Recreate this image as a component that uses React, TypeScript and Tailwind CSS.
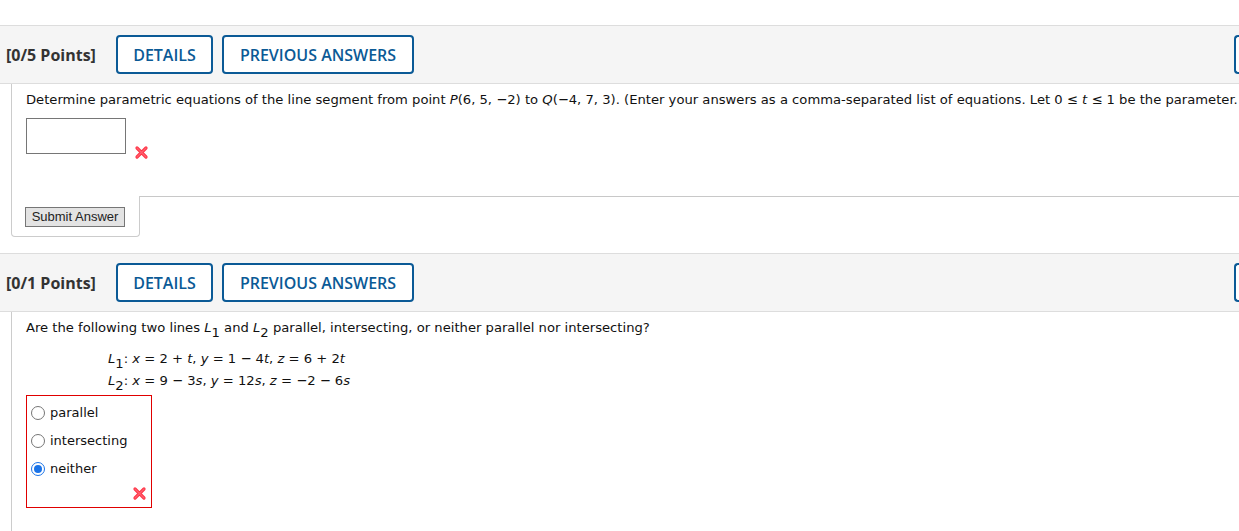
import React from "react";

const body = { fontFamily: '"DejaVu Sans", Verdana, sans-serif' } as React.CSSProperties;
const head = { fontFamily: '"Open Sans", "Noto Sans", sans-serif' } as React.CSSProperties;

function XMark() {
  return (
    <svg width="15" height="15" viewBox="0 0 15 15">
      <path d="M3 3 L12 12 M12 3 L3 12" stroke="#ff3344" strokeWidth="3.2" strokeLinecap="round" />
      <path d="M3 3 L12 12 M12 3 L3 12" stroke="#ff6070" strokeWidth="1.2" strokeLinecap="round" />
    </svg>
  );
}

function Sub({ n }: { n: string }) {
  return <span className="relative top-[5px]">{n}</span>;
}

function Header({ pts }: { pts: string }) {
  return (
    <div className="flex h-[59px] items-center border-y border-[#dddddd] bg-[#f5f5f5]" style={head}>
      <div className="w-[116px] pl-[6px] text-[16px] font-bold text-[#333333]">{pts}</div>
      <button className="flex h-[39px] w-[97px] items-center justify-center rounded-[4px] border-2 border-[#0b5a96] bg-white text-[16px] font-semibold text-[#0b5a96]">
        DETAILS
      </button>
      <button className="ml-[9px] flex h-[39px] w-[192px] items-center justify-center rounded-[4px] border-2 border-[#0b5a96] bg-white text-[16px] font-semibold text-[#0b5a96]">
        PREVIOUS ANSWERS
      </button>
      <div className="ml-auto h-[39px] w-[5px] rounded-l-[4px] border-y-2 border-l-2 border-[#0b5a96] bg-white" />
    </div>
  );
}

function Radio({ checked, label }: { checked?: boolean; label: string }) {
  return (
    <div className="flex h-[28px] items-center">
      {checked ? (
        <span className="flex h-[14px] w-[14px] items-center justify-center rounded-full border border-[#1a73e8] bg-white">
          <span className="h-[8px] w-[8px] rounded-full bg-[#1a73e8]" />
        </span>
      ) : (
        <span className="h-[14px] w-[14px] rounded-full border border-[#767676] bg-white" />
      )}
      <span className="ml-[5px] text-[13px] text-[#111111]">{label}</span>
    </div>
  );
}

export default function App() {
  return (
    <div className="h-[531px] w-[1239px] overflow-hidden bg-white" style={body}>
      <div className="h-[25px]" />
      <Header pts="[0/5 Points]" />
      <div className="ml-[11px] border-l border-[#cccccc]">
        <div className="h-[112px] pl-[14px] pt-[7px]">
          <p className="whitespace-nowrap text-[13.15px] leading-[18px] text-[#111111]">
            Determine parametric equations of the line segment from point <i>P</i>(6, 5, −2) to <i>Q</i>(−4, 7, 3). (Enter your answers as a comma-separated list of equations. Let 0 ≤ <i>t</i> ≤ 1 be the parameter.
          </p>
          <div className="mt-[9px] flex items-end">
            <div className="h-[36px] w-[100px] border border-[#767676] bg-white" />
            <div className="mb-[-6px] ml-[8px]">
              <XMark />
            </div>
          </div>
        </div>
      </div>
      <div className="flex">
        <div className="ml-[11px] h-[41px] w-[129px] rounded-b-[4px] border-x border-b border-[#cccccc] pl-[13px] pt-[11px]">
          <button
            className="flex h-[20px] w-[100px] items-center justify-center border border-[#767676] bg-[#e3e3e3] text-[13px] text-[#222222]"
            style={{ fontFamily: '"Liberation Sans", Arial, sans-serif' }}
          >
            Submit Answer
          </button>
        </div>
        <div className="flex-1 border-t border-[#c8c8c8]" />
      </div>
      <div className="h-[16px]" />
      <Header pts="[0/1 Points]" />
      <div className="ml-[11px] h-[220px] border-l border-[#cccccc] pl-[14px] pt-[7px]">
        <p className="whitespace-nowrap text-[13.15px] leading-[18px] text-[#111111]">
          Are the following two lines <i>L</i>
          <Sub n="1" /> and <i>L</i>
          <Sub n="2" /> parallel, intersecting, or neither parallel nor intersecting?
        </p>
        <div className="mt-[11px] pl-[82px] text-[13.15px] leading-[22px] text-[#111111]">
          <div>
            <i>L</i>
            <Sub n="1" />: <i>x</i> = 2 + <i>t</i>, <i>y</i> = 1 − 4<i>t</i>, <i>z</i> = 6 + 2<i>t</i>
          </div>
          <div>
            <i>L</i>
            <Sub n="2" />: <i>x</i> = 9 − 3<i>s</i>, <i>y</i> = 12<i>s</i>, <i>z</i> = −2 − 6<i>s</i>
          </div>
        </div>
        <div className="mt-[3px] h-[113px] w-[126px] border border-[#e00000] pl-[4px] pt-[3px]">
          <Radio label="parallel" />
          <Radio label="intersecting" />
          <Radio checked label="neither" />
          <div className="flex justify-end pr-[4px] pt-[3px]">
            <XMark />
          </div>
        </div>
      </div>
    </div>
  );
}
